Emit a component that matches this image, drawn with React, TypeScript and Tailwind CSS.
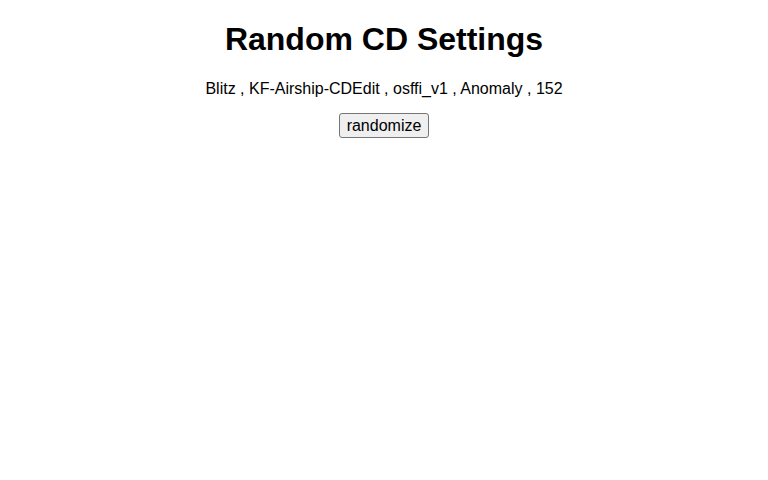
import { useState } from 'react'

const modes = ['Blitz', 'Classic', 'Marathon']
const maps = ['KF-Airship-CDEdit', 'KF-BurningParis', 'KF-Outpost']
const configs = ['osffi_v1', 'osffi_v2', 'basic']
const mutators = ['Anomaly', 'Standard', 'Chaos']

const pick = (list: string[]) => list[Math.floor(Math.random() * list.length)]

const App = () => {
  const [settings, setSettings] = useState(['Blitz', 'KF-Airship-CDEdit', 'osffi_v1', 'Anomaly', '152'])

  const randomize = () => {
    setSettings([
      pick(modes),
      pick(maps),
      pick(configs),
      pick(mutators),
      String(100 + Math.floor(Math.random() * 100)),
    ])
  }

  return (
    <div className="min-h-screen bg-white text-black text-center font-['Liberation_Sans',Arial,sans-serif] text-base">
      <h1 className="pt-[21px] mb-[22px] text-[32px] leading-[37px] font-bold">Random CD Settings</h1>
      <p className="leading-[18px] mb-[15px]">{settings.join(' , ')}</p>
      <div>
        <button
          onClick={randomize}
          className="px-[7px] py-[1px] leading-[21px] text-base text-black bg-[#efefef] border border-[#767676] rounded-[3px] hover:bg-[#e5e5e5]"
        >
          randomize
        </button>
      </div>
    </div>
  )
}

export default App
